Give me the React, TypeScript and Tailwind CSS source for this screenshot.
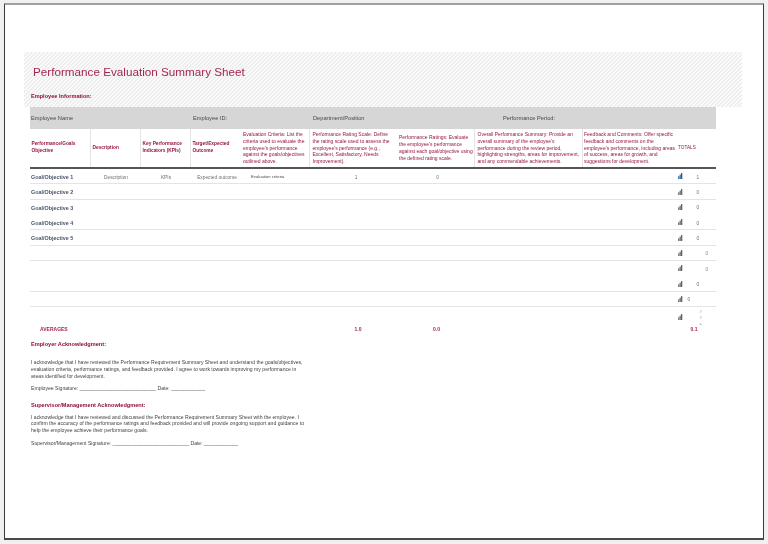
const gridCols = "grid grid-cols-[61px_50px_50px_52px_67px_88px_77px_108px_93px_40px]";
const sans = "font-['Liberation_Sans',Arial,sans-serif]";

const headerCells = [
  { lines: ["Performance/Goals", "Objective"], bold: true, divider: true, pad: "pl-[1.5px]" },
  { lines: ["Description"], bold: true, divider: true, pad: "pl-[1.5px]" },
  { lines: ["Key Performance", "Indicators (KPIs)"], bold: true, divider: true, pad: "pl-[1.5px]" },
  { lines: ["Target/Expected", "Outcome"], bold: true, divider: false, pad: "pl-[1.5px]" },
  {
    lines: ["Evaluation Criteria: List the", "criteria used to evaluate the", "employee's performance", "against the goals/objectives", "outlined above."],
    bold: false,
    divider: true,
    pad: "pl-0",
  },
  {
    lines: ["Performance Rating Scale: Define", "the rating scale used to assess the", "employee's performance (e.g.,", "Excellent, Satisfactory, Needs", "Improvement)."],
    bold: false,
    divider: false,
    pad: "pl-[2.5px]",
  },
  {
    lines: ["Performance Ratings: Evaluate", "the employee's performance", "against each goal/objective using", "the defined rating scale."],
    bold: false,
    divider: true,
    pad: "pl-[1px]",
  },
  {
    lines: ["Overall Performance Summary: Provide an", "overall summary of the employee's", "performance during the review period,", "highlighting strengths, areas for improvement,", "and any commendable achievements."],
    bold: false,
    divider: true,
    pad: "pl-[2.5px]",
  },
  {
    lines: ["Feedback and Comments: Offer specific", "feedback and comments on the", "employee's performance, including areas", "of success, areas for growth, and", "suggestions for development."],
    bold: false,
    divider: false,
    pad: "pl-[1px]",
  },
];

// valueClass = where the total value sits after the icon
const rows = [
  { goal: "Goal/Objective 1", line: true, valueClass: "pl-[14px]", value: "1", active: true },
  { goal: "Goal/Objective 2", line: true, valueClass: "pl-[14px]", value: "0" },
  { goal: "Goal/Objective 3", line: false, valueClass: "pl-[14px]", value: "0" },
  { goal: "Goal/Objective 4", line: true, valueClass: "pl-[14px]", value: "0" },
  { goal: "Goal/Objective 5", line: true, valueClass: "pl-[14px]", value: "0" },
  { goal: "", line: true, valueClass: "pl-[23px] text-[#a8835f]", value: "0" },
  { goal: "", line: false, valueClass: "pl-[23px] text-[#a8835f]", value: "0" },
  { goal: "", line: true, valueClass: "pl-[14px]", value: "0" },
  { goal: "", line: true, valueClass: "pl-[5px]", value: "0" },
  { goal: "", line: false, valueClass: "", value: "#" },
];

function BarsIcon({ active }: { active?: boolean }) {
  const fill = active ? "#235f9e" : "#666666";
  return (
    <svg width="5" height="6" viewBox="0 0 5 6" className="-mt-[1.5px] shrink-0">
      <rect x="0.2" y="3.2" width="1.2" height="2.8" fill={fill} />
      <rect x="1.6" y="1.6" width="1.2" height="4.4" fill={fill} />
      <rect x="3" y="0" width="1.3" height="6" fill={fill} />
    </svg>
  );
}

function Heading({ children }: { children: React.ReactNode }) {
  return <h2 className="text-[5.6px] leading-[7px] font-bold text-[#8e1038]">{children}</h2>;
}

function Body({ lines }: { lines: string[] }) {
  return (
    <p className="text-[5.1px] leading-[6.8px] text-[#3f3f3f]">
      {lines.map((l) => (
        <span key={l} className="block whitespace-nowrap">{l}</span>
      ))}
    </p>
  );
}

export default function App() {
  return (
    <div className={`h-[544px] w-[768px] overflow-hidden bg-[#f0f0f0] px-[4px] pt-[3px] ${sans}`}>
      <div className="h-[537px] border-x border-t-2 border-b-2 border-x-[#3a3a3a] border-t-[#a0a0a0] border-b-[#4a4a4a] bg-white blur-[0.35px]">
        {/* Title band */}
        <div className="mt-[47px] ml-[19px] h-[55px] w-[718px] bg-[repeating-linear-gradient(135deg,#eeeeee_0,#eeeeee_1.414px,#fafafa_1.414px,#fafafa_2.828px)] pl-[7px]">
          <h1 className="pt-[13px] pl-[2px] text-[11.7px] leading-[14px] text-[#a3284c]">Performance Evaluation Summary Sheet</h1>
          <div className="pt-[14px]">
            <Heading>Employee Information:</Heading>
          </div>
        </div>

        <div className="ml-[25px] w-[686px]">
          {/* Employee info bar */}
          <div className={`${gridCols} h-[22px] items-center bg-[#d6d6d6] text-[5.7px] text-[#474747]`}>
            <span className="col-span-3 pl-[1px]">Employee Name</span>
            <span className="col-span-2 pl-[2px]">Employee ID:</span>
            <span className="col-span-2 pl-[3px]">Department/Position</span>
            <span className="text-center">Performance Period:</span>
          </div>

          {/* Column headers */}
          <div className={`${gridCols} h-[40px] border-b-2 border-[#555555]`}>
            {headerCells.map((c, i) => (
              <div
                key={i}
                className={`flex flex-col justify-center text-[#96173f] ${c.pad} ${c.divider ? "border-r border-[#e4e4e4]" : ""} ${c.bold ? "text-[4.8px] leading-[6.6px] font-bold" : "text-[5px] leading-[6.9px]"}`}
              >
                {c.lines.map((l) => (
                  <span key={l} className="whitespace-nowrap">{l}</span>
                ))}
              </div>
            ))}
            <div className="flex items-center pl-[2px] text-[4.7px] text-[#96173f]">TOTALS</div>
          </div>

          {/* Goal rows */}
          {rows.map((r, i) => (
            <div key={i} className={`${gridCols} h-[15.35px] items-center border-b pt-[2px] text-[4.8px] text-[#6f6f6f] ${r.line ? "border-[#e4e4e4]" : "border-transparent"}`}>
              <span className="pl-[1px] text-[5.4px] font-bold whitespace-nowrap text-[#4b5568]">{r.goal}</span>
              {i === 0 ? (
                <>
                  <span className="text-center">Description</span>
                  <span className="text-center">KPIs</span>
                  <span className="text-center whitespace-nowrap">Expected outcome</span>
                  <span className="pl-[8px] text-[4.2px] whitespace-nowrap text-[#4a4a4a]">Evaluation criteria</span>
                  <span className="pl-[4px] text-center">1</span>
                  <span className="pl-[2px] text-center">0</span>
                  <span />
                  <span />
                </>
              ) : (
                <span className="col-span-8" />
              )}
              <div className="flex items-center pl-[1.5px]">
                <BarsIcon active={r.active} />
                {r.value === "#" ? (
                  <span className="flex flex-col pl-[17px] text-[4px] leading-[6px] text-[#888888]">
                    <span>#</span>
                    <span>#</span>
                    <span>=</span>
                  </span>
                ) : (
                  <span className={r.valueClass}>{r.value}</span>
                )}
              </div>
            </div>
          ))}

          {/* Averages */}
          <div className={`${gridCols} h-[15px] items-center text-[5px] font-bold text-[#a3284c]`}>
            <span className="pl-[10px]">AVERAGES</span>
            <span />
            <span />
            <span />
            <span />
            <span className="pl-[8px] text-center">1.0</span>
            <span className="text-center">0.0</span>
            <span />
            <span />
            <span className="pl-[14.5px]">0.1</span>
          </div>
        </div>

        {/* Acknowledgments */}
        <div className="ml-[26px] w-[290px] pt-[4px]">
          <Heading>Employer Acknowledgment:</Heading>
          <div className="pt-[11px]">
            <Body
              lines={[
                "I acknowledge that I have reviewed the Performance Requirement Summary Sheet and understand the goals/objectives,",
                "evaluation criteria, performance ratings, and feedback provided. I agree to work towards improving my performance in",
                "areas identified for development.",
              ]}
            />
          </div>
          <div className="pt-[5px]">
            <Body lines={["Employee Signature: ___________________________ Date: ____________"]} />
          </div>
          <div className="pt-[10px]">
            <Heading>Supervisor/Management Acknowledgment:</Heading>
          </div>
          <div className="pt-[5px]">
            <Body
              lines={[
                "I acknowledge that I have reviewed and discussed the Performance Requirement Summary Sheet with the employee. I",
                "confirm the accuracy of the performance ratings and feedback provided and will provide ongoing support and guidance to",
                "help the employee achieve their performance goals.",
              ]}
            />
          </div>
          <div className="pt-[6px]">
            <Body lines={["Supervisor/Management Signature: ___________________________ Date: ____________"]} />
          </div>
        </div>
      </div>
    </div>
  );
}
